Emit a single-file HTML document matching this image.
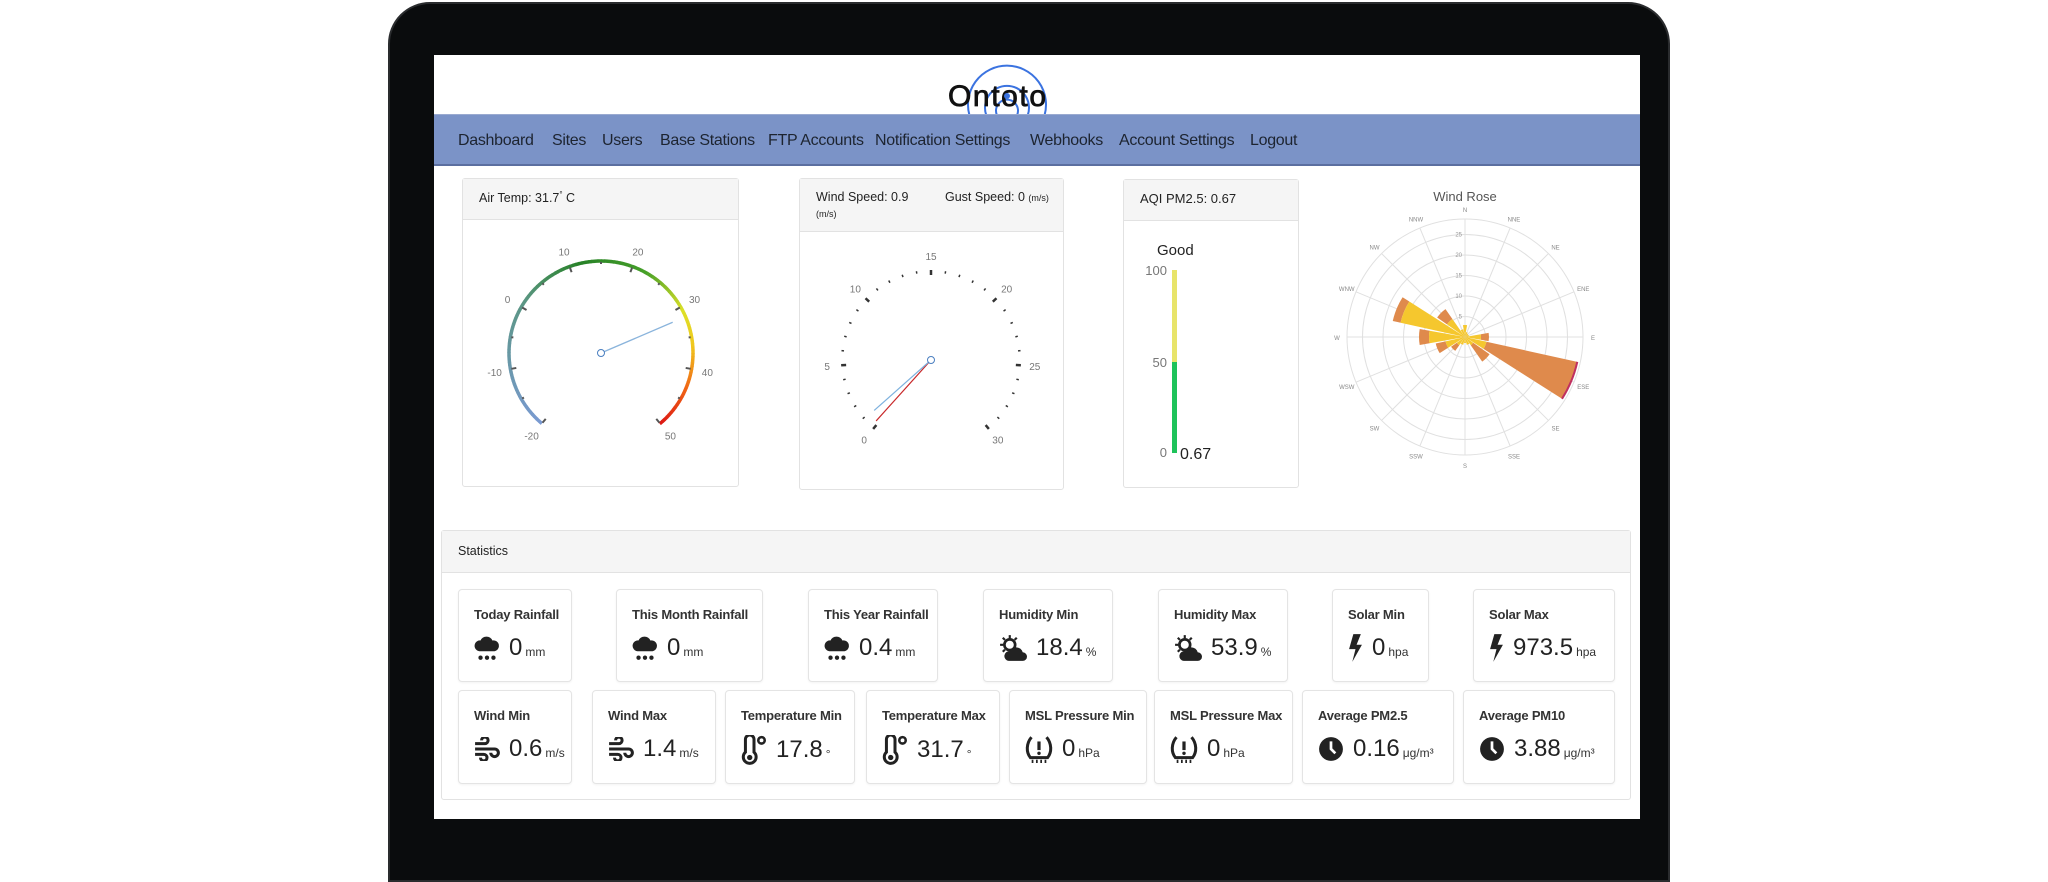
<!DOCTYPE html>
<html><head><meta charset="utf-8">
<style>
*{margin:0;padding:0;box-sizing:border-box}
body{width:2048px;height:847px;background:#fff;position:relative;overflow:hidden;font-family:"Liberation Sans",sans-serif;color:#222}
.bezel{position:absolute;left:388px;top:2px;width:1282px;height:880px;background:#0a0c0d;border-radius:42px 42px 0 0;border:2px solid #2a2c2e}
.screen{position:absolute;left:434px;top:55px;width:1206px;height:764px;background:#fff;overflow:hidden}
.abs{position:absolute}
.nav{position:absolute;left:0;top:59px;width:1206px;height:52px;background:#7b93c7;border-bottom:2px solid #5b6fa0;border-top:1px solid #9aaad0}
.nav span{position:absolute;top:17px;font-size:16px;color:#1d2430;letter-spacing:-0.3px}
.card{position:absolute;border:1px solid #e2e2e2;border-radius:3px;background:#fff}
.card .hd{background:#f5f5f5;border-bottom:1px solid #e2e2e2;font-size:12.5px;padding:11px 16px;color:#222}
.st{position:absolute;border:1px solid #e4e4e4;border-radius:4px;background:#fff;box-shadow:0 1px 2px rgba(0,0,0,.05)}
.st .t{position:absolute;left:15px;top:17px;font-size:13px;font-weight:bold;color:#333;white-space:nowrap;letter-spacing:-0.2px}
.st .v{position:absolute;left:15px;top:44px;font-size:24px;color:#222;white-space:nowrap;display:flex;align-items:center}
.st .v svg{margin-right:9px}
.st .v small{font-size:12px;color:#333;margin-left:3px;margin-top:8px}
</style></head><body>
<div class="bezel"></div>
<div class="screen">
  <svg class="abs" style="left:0;top:0" width="1206" height="60">
    <g fill="none" stroke="#3b73e0" stroke-width="2">
      <path d="M536 62 A39 39 0 1 1 610 62"/>
      <path d="M553 62 A22 22 0 1 1 593 62"/>
      <path d="M564 62 A11 11 0 1 1 582 62"/>
    </g>
    <text x="514" y="51" font-family="Liberation Sans" font-size="30" fill="#111" stroke="#111" stroke-width="0.8" textLength="98">Ontoto</text>
    <circle cx="573" cy="41" r="3" fill="#3b73e0"/>
  </svg>
  <div class="nav">
    <span style="left:24px">Dashboard</span><span style="left:118px">Sites</span><span style="left:168px">Users</span><span style="left:226px">Base Stations</span><span style="left:334px">FTP Accounts</span><span style="left:441px">Notification Settings</span><span style="left:596px">Webhooks</span><span style="left:685px">Account Settings</span><span style="left:816px">Logout</span>
  </div>

  <div class="card" style="left:28px;top:123px;width:277px;height:309px"><div class="hd" style="height:41px">Air Temp: 31.7<sup style="font-size:8px">°</sup> C</div></div>
  <div class="card" style="left:365px;top:123px;width:265px;height:312px"><div class="hd" style="height:53px;padding-top:10px;line-height:16px"><span>Wind Speed: 0.9</span><span style="position:absolute;left:145px">Gust Speed: 0 <small style="font-size:9px">(m/s)</small></span><br><small style="font-size:9px">(m/s)</small></div></div>
  <div class="card" style="left:689px;top:124px;width:176px;height:309px"><div class="hd" style="height:41px;font-size:13px">AQI PM2.5: 0.67</div></div>

  <svg id="g" class="abs" style="left:0;top:0" width="1206" height="470"></svg>

  <div class="card" style="left:7px;top:475px;width:1190px;height:270px"><div class="hd" style="height:42px;padding-top:13px">Statistics</div></div>

  <div class="st" style="left:24px;top:534px;width:114px;height:93px"><div class="t">Today Rainfall</div><div class="v"><svg width="26" height="28" viewBox="0 0 24 26"><path d="M5 16a5 5 0 0 1 1-10a6 6 0 0 1 11 0a5 5 0 0 1 2 10z" fill="#222"/><circle cx="6" cy="22" r="2" fill="#222"/><circle cx="12" cy="22" r="2" fill="#222"/><circle cx="18" cy="22" r="2" fill="#222"/></svg>0<small>mm</small></div></div>
  <div class="st" style="left:182px;top:534px;width:147px;height:93px"><div class="t">This Month Rainfall</div><div class="v"><svg width="26" height="28" viewBox="0 0 24 26"><path d="M5 16a5 5 0 0 1 1-10a6 6 0 0 1 11 0a5 5 0 0 1 2 10z" fill="#222"/><circle cx="6" cy="22" r="2" fill="#222"/><circle cx="12" cy="22" r="2" fill="#222"/><circle cx="18" cy="22" r="2" fill="#222"/></svg>0<small>mm</small></div></div>
  <div class="st" style="left:374px;top:534px;width:130px;height:93px"><div class="t">This Year Rainfall</div><div class="v"><svg width="26" height="28" viewBox="0 0 24 26"><path d="M5 16a5 5 0 0 1 1-10a6 6 0 0 1 11 0a5 5 0 0 1 2 10z" fill="#222"/><circle cx="6" cy="22" r="2" fill="#222"/><circle cx="12" cy="22" r="2" fill="#222"/><circle cx="18" cy="22" r="2" fill="#222"/></svg>0.4<small>mm</small></div></div>
  <div class="st" style="left:549px;top:534px;width:130px;height:93px"><div class="t">Humidity Min</div><div class="v"><svg width="28" height="28" viewBox="0 0 26 26"><circle cx="10" cy="10" r="5" fill="none" stroke="#222" stroke-width="2.5"/><path d="M10 1v3M10 16v3M1 10h3M3.5 3.5l2 2M16.5 3.5l-2 2M3.5 16.5l2-2" stroke="#222" stroke-width="2"/><path d="M9 25a4.5 4.5 0 0 1 1-9a6.5 6.5 0 0 1 12 1a4 4 0 0 1 0 8z" fill="#222"/></svg>18.4<small>%</small></div></div>
  <div class="st" style="left:724px;top:534px;width:130px;height:93px"><div class="t">Humidity Max</div><div class="v"><svg width="28" height="28" viewBox="0 0 26 26"><circle cx="10" cy="10" r="5" fill="none" stroke="#222" stroke-width="2.5"/><path d="M10 1v3M10 16v3M1 10h3M3.5 3.5l2 2M16.5 3.5l-2 2M3.5 16.5l2-2" stroke="#222" stroke-width="2"/><path d="M9 25a4.5 4.5 0 0 1 1-9a6.5 6.5 0 0 1 12 1a4 4 0 0 1 0 8z" fill="#222"/></svg>53.9<small>%</small></div></div>
  <div class="st" style="left:898px;top:534px;width:97px;height:93px"><div class="t">Solar Min</div><div class="v"><svg width="15" height="28" viewBox="0 0 14 26"><path d="M5 0h7l-4 10h5L4 26l3-12H1z" fill="#222"/></svg>0<small>hpa</small></div></div>
  <div class="st" style="left:1039px;top:534px;width:142px;height:93px"><div class="t">Solar Max</div><div class="v"><svg width="15" height="28" viewBox="0 0 14 26"><path d="M5 0h7l-4 10h5L4 26l3-12H1z" fill="#222"/></svg>973.5<small>hpa</small></div></div>

  <div class="st" style="left:24px;top:635px;width:114px;height:94px"><div class="t">Wind Min</div><div class="v"><svg width="26" height="24" viewBox="0 0 24 22"><path d="M1 6h9a3 3 0 1 0-3-3M1 11h18a3.5 3.5 0 1 1-3.5 3.5M1 16h8a3 3 0 1 1-3 3" fill="none" stroke="#222" stroke-width="2.8"/></svg>0.6<small>m/s</small></div></div>
  <div class="st" style="left:158px;top:635px;width:124px;height:94px"><div class="t">Wind Max</div><div class="v"><svg width="26" height="24" viewBox="0 0 24 22"><path d="M1 6h9a3 3 0 1 0-3-3M1 11h18a3.5 3.5 0 1 1-3.5 3.5M1 16h8a3 3 0 1 1-3 3" fill="none" stroke="#222" stroke-width="2.8"/></svg>1.4<small>m/s</small></div></div>
  <div class="st" style="left:291px;top:635px;width:130px;height:94px"><div class="t">Temperature Min</div><div class="v"><svg width="26" height="30" viewBox="0 0 24 28"><path d="M4 16V4a4 4 0 0 1 8 0v12a6 6 0 1 1-8 0z" fill="none" stroke="#222" stroke-width="2.8"/><circle cx="8" cy="21" r="2.5" fill="#222"/><circle cx="19" cy="5" r="3" fill="none" stroke="#222" stroke-width="2.4"/></svg>17.8<small>°</small></div></div>
  <div class="st" style="left:432px;top:635px;width:134px;height:94px"><div class="t">Temperature Max</div><div class="v"><svg width="26" height="30" viewBox="0 0 24 28"><path d="M4 16V4a4 4 0 0 1 8 0v12a6 6 0 1 1-8 0z" fill="none" stroke="#222" stroke-width="2.8"/><circle cx="8" cy="21" r="2.5" fill="#222"/><circle cx="19" cy="5" r="3" fill="none" stroke="#222" stroke-width="2.4"/></svg>31.7<small>°</small></div></div>
  <div class="st" style="left:575px;top:635px;width:138px;height:94px"><div class="t">MSL Pressure Min</div><div class="v"><svg width="28" height="28" viewBox="0 0 26 26"><path d="M6 2C1 8 1 16 5 21h16c4-5 4-13-1-19" fill="none" stroke="#222" stroke-width="2.8"/><path d="M13 6v8" stroke="#222" stroke-width="3"/><circle cx="13" cy="17" r="1.6" fill="#222"/><path d="M7 23v3M11 23v3M15 23v3M19 23v3" stroke="#222" stroke-width="1.6"/></svg>0<small>hPa</small></div></div>
  <div class="st" style="left:720px;top:635px;width:139px;height:94px"><div class="t">MSL Pressure Max</div><div class="v"><svg width="28" height="28" viewBox="0 0 26 26"><path d="M6 2C1 8 1 16 5 21h16c4-5 4-13-1-19" fill="none" stroke="#222" stroke-width="2.8"/><path d="M13 6v8" stroke="#222" stroke-width="3"/><circle cx="13" cy="17" r="1.6" fill="#222"/><path d="M7 23v3M11 23v3M15 23v3M19 23v3" stroke="#222" stroke-width="1.6"/></svg>0<small>hPa</small></div></div>
  <div class="st" style="left:868px;top:635px;width:152px;height:94px"><div class="t">Average PM2.5</div><div class="v"><svg width="26" height="26" viewBox="0 0 24 24"><circle cx="12" cy="12" r="11" fill="#222"/><path d="M12 5v7l4 4" stroke="#fff" stroke-width="2.5" fill="none"/></svg>0.16<small>μg/m³</small></div></div>
  <div class="st" style="left:1029px;top:635px;width:152px;height:94px"><div class="t">Average PM10</div><div class="v"><svg width="26" height="26" viewBox="0 0 24 24"><circle cx="12" cy="12" r="11" fill="#222"/><path d="M12 5v7l4 4" stroke="#fff" stroke-width="2.5" fill="none"/></svg>3.88<small>μg/m³</small></div></div>
</div>

<script>
var g=document.getElementById('g'),s='';
function P(cx,cy,r,a){a=a*Math.PI/180;return [cx+r*Math.sin(a),cy-r*Math.cos(a)];}
function lerp(a,b,t){return a.map(function(x,i){return Math.round(x+(b[i]-x)*t)})}
var tc=[167,298],tr=92;
var stops=[[0,[122,154,210]],[0.3,[90,150,130]],[0.45,[40,130,40]],[0.6,[70,160,40]],[0.72,[220,225,40]],[0.8,[240,200,30]],[0.9,[240,100,20]],[1,[220,20,20]]];
function col(t){for(var i=1;i<stops.length;i++){if(t<=stops[i][0]){var a=stops[i-1],b=stops[i];var c=lerp(a[1],b[1],(t-a[0])/(b[0]-a[0]));return 'rgb('+c+')';}}return 'rgb(220,20,20)';}
for(var i=0;i<140;i++){var a1=-140+i*2,a2=a1+2.3;var p1=P(tc[0],tc[1],tr,a1),p2=P(tc[0],tc[1],tr,a2);s+='<path d="M'+p1+' A'+tr+' '+tr+' 0 0 1 '+p2+'" stroke="'+col(i/140)+'" stroke-width="3.5" fill="none"/>';}
for(var v=-20;v<=50;v+=5){var a=-140+(v+20)/70*280;var p1=P(tc[0],tc[1],tr-1,a),p2=P(tc[0],tc[1],tr-(v%10==0?6:3),a);s+='<line x1="'+p1[0]+'" y1="'+p1[1]+'" x2="'+p2[0]+'" y2="'+p2[1]+'" stroke="#555" stroke-width="2"/>';
 if(v%10==0){var q=P(tc[0],tc[1],tr+16,a);s+='<text x="'+q[0]+'" y="'+(q[1]+4)+'" font-size="10" fill="#777" text-anchor="middle">'+v+'</text>';}}
var na=-140+51.7/70*280,np=P(tc[0],tc[1],78,na);
s+='<line x1="'+tc[0]+'" y1="'+tc[1]+'" x2="'+np[0]+'" y2="'+np[1]+'" stroke="#8ab4dc" stroke-width="1.3"/><circle cx="'+tc[0]+'" cy="'+tc[1]+'" r="3.5" fill="#fff" stroke="#4a7fc0"/>';
var wc=[497,305],wr=90;
for(var v=0;v<=30;v++){var a=-140+v/30*280;var maj=v%5==0;var p1=P(wc[0],wc[1],wr,a),p2=P(wc[0],wc[1],wr-(maj?5:2.5),a);s+='<line x1="'+p1[0]+'" y1="'+p1[1]+'" x2="'+p2[0]+'" y2="'+p2[1]+'" stroke="#333" stroke-width="'+(maj?2.5:1.5)+'"/>';
 if(maj){var q=P(wc[0],wc[1],wr+14,a);s+='<text x="'+q[0]+'" y="'+(q[1]+4)+'" font-size="10" fill="#777" text-anchor="middle">'+v+'</text>';}}
var b=P(wc[0],wc[1],76,-140+0.9/30*280),r=P(wc[0],wc[1],82,-138);
s+='<line x1="'+wc[0]+'" y1="'+wc[1]+'" x2="'+r[0]+'" y2="'+r[1]+'" stroke="#c8282a" stroke-width="1.2"/><line x1="'+wc[0]+'" y1="'+wc[1]+'" x2="'+b[0]+'" y2="'+b[1]+'" stroke="#7eb1de" stroke-width="1.2"/><circle cx="'+wc[0]+'" cy="'+wc[1]+'" r="3.5" fill="#fff" stroke="#4a7fc0"/>';
s+='<rect x="738" y="215" width="5" height="92" fill="#e8e46a"/><rect x="738" y="307" width="5" height="91" fill="#1ec35a"/>';
s+='<text x="723" y="200" font-size="15" fill="#222">Good</text>';
s+='<text x="733" y="220" font-size="13" fill="#777" text-anchor="end">100</text><text x="733" y="312" font-size="13" fill="#777" text-anchor="end">50</text><text x="733" y="402" font-size="13" fill="#777" text-anchor="end">0</text>';
s+='<text x="746" y="404" font-size="16" fill="#222">0.67</text>';
var rc=[1031,282],R=118,k=4.1;
s+='<text x="'+rc[0]+'" y="146" font-size="13" fill="#555" text-anchor="middle">Wind Rose</text>';
[5,10,15,20,25].forEach(function(v){s+='<circle cx="'+rc[0]+'" cy="'+rc[1]+'" r="'+(v*k)+'" fill="none" stroke="#e0e0e0"/>';});
s+='<circle cx="'+rc[0]+'" cy="'+rc[1]+'" r="'+R+'" fill="none" stroke="#e0e0e0"/>';
var dirs=['N','NNE','NE','ENE','E','ESE','SE','SSE','S','SSW','SW','WSW','W','WNW','NW','NNW'];
dirs.forEach(function(d,i){var a=i*22.5,p=P(rc[0],rc[1],R,a),q=P(rc[0],rc[1],R+10,a);s+='<line x1="'+rc[0]+'" y1="'+rc[1]+'" x2="'+p[0]+'" y2="'+p[1]+'" stroke="#e0e0e0"/><text x="'+q[0]+'" y="'+(q[1]+3)+'" font-size="6" fill="#888" text-anchor="middle">'+d+'</text>';});
[5,10,15,20,25].forEach(function(v){s+='<text x="'+(rc[0]-3)+'" y="'+(rc[1]-v*k+2)+'" font-size="6" fill="#999" text-anchor="end">'+v+'</text>';});
function wedge(a,r0,r1,c){var w=10;var p1=P(rc[0],rc[1],r0,a-w),p2=P(rc[0],rc[1],r1,a-w),p3=P(rc[0],rc[1],r1,a+w),p4=P(rc[0],rc[1],r0,a+w);s+='<path d="M'+p1+' L'+p2+' A'+r1+' '+r1+' 0 0 1 '+p3+' L'+p4+(r0>0?' A'+r0+' '+r0+' 0 0 0 '+p1:'')+'Z" fill="'+c+'"/>';}
var Y='#f5c72e',O='#df8a4c';
var data=[[0,12,0],[22.5,5,0],[45,4,0],[67.5,4,0],[90,16,24],[112.5,22,115],[135,10,30],[157.5,8,0],[180,6,0],[202.5,8,0],[225,10,17],[247.5,20,30],[270,36,46],[292.5,66,74],[315,22,34],[337.5,8,0]];
data.forEach(function(d){if(d[2]>d[1])wedge(d[0],d[1],d[2],O);wedge(d[0],0,d[1],Y);});
var e1=P(rc[0],rc[1],115,102.5),e2=P(rc[0],rc[1],115,122.5);s+='<path d="M'+e1+' A115 115 0 0 1 '+e2+'" stroke="#c03060" stroke-width="2" fill="none"/>';
g.innerHTML=s;
</script>
</body></html>
